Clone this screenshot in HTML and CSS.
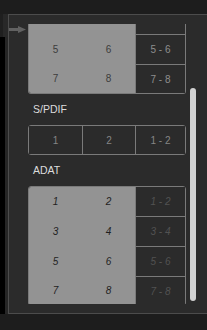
FILE: index.html
```html
<!DOCTYPE html>
<html lang="en">
<head>
  <meta charset="UTF-8">
  <title>Channel pairs</title>
  <link rel="stylesheet" href="styles.css">
</head>
<body>
  <div class="topbar"></div>
  <div class="main">
    <div class="side">
      <div class="side-top"></div>
      <div class="side-low"></div>
    </div>

    <div class="panel">
      <svg class="arrow" width="17" height="8" viewBox="0 0 17 8">
        <rect x="0" y="2" width="10" height="3" fill="#616161"/>
        <polygon points="9,0 17,3.5 9,7" fill="#616161"/>
      </svg>
      <div class="thumb"></div>

      <div class="scroll">
        <!-- analog, scrolled past the first rows -->
        <div class="grid first">
          <div class="c"></div><div class="c"></div><div class="c pair"></div>
          <div class="c">5</div><div class="c">6</div><div class="c pair">5 - 6</div>
          <div class="c bl">7</div><div class="c">8</div><div class="c pair">7 - 8</div>
        </div>

        <div class="label">S/PDIF</div>
        <div class="grid off">
          <div class="c">1</div><div class="c">2</div><div class="c">1 - 2</div>
        </div>

        <div class="label">ADAT</div>
        <div class="grid adat">
          <div class="c tl">1</div><div class="c">2</div><div class="c pair">1 - 2</div>
          <div class="c">3</div><div class="c">4</div><div class="c pair">3 - 4</div>
          <div class="c">5</div><div class="c">6</div><div class="c pair">5 - 6</div>
          <div class="c bl">7</div><div class="c">8</div><div class="c pair">7 - 8</div>
        </div>
      </div>
    </div>
  </div>
</body>
</html>
```

FILE: styles.css
```css
html, body {
  margin: 0;
  padding: 0;
}
body {
  width: 207px;
  height: 330px;
  overflow: hidden;
  background: #1d1d1d;
  font-family: "Liberation Sans", Arial, sans-serif;
}
.topbar {
  height: 14px;
  background: #1d1d1d;
}
.main {
  display: flex;
  height: 300px;
}
.side {
  width: 8px;
  display: flex;
  flex-direction: column;
}
.side-top {
  height: 23px;
  background: #282828;
  border-left: 3px solid #1f1f1f;
  box-sizing: border-box;
}
.side-low {
  flex: 1;
  background: #000;
  border-right: 3px solid #262626;
}
.panel {
  position: relative;
  flex: 1;
  background: #2b2b2b;
  border: 1px solid #4c4c4c;
  border-right: none;
  box-sizing: border-box;
  padding: 9px 0 0 19px;
}
.arrow {
  position: absolute;
  left: 0;
  top: 11px;
}
.thumb {
  position: absolute;
  left: 181px;
  top: 73px;
  width: 6px;
  height: 213px;
  border-radius: 3px;
  background: #d2d2d2;
}
.scroll {
  height: 280px;
  overflow: hidden;
  width: 160px;
}
.grid {
  width: 158px;
  box-sizing: border-box;
  border: 1px solid #7a7a7a;
  border-radius: 3px;
  display: grid;
  grid-template-columns: 53px 53px 1fr;
  grid-template-rows: 29px 30px 30px 29px;
  font-size: 10px;
}
.c {
  display: flex;
  align-items: center;
  justify-content: center;
  box-sizing: border-box;
  background: #939393;
  color: #3c3c3c;
}
.tl {
  border-top-left-radius: 2px;
}
.bl {
  border-bottom-left-radius: 2px;
}
.pair {
  background: #2b2b2b;
  color: #8e8e8e;
  border-left: 1px solid #7a7a7a;
  border-top: 1px solid #7a7a7a;
}
.grid .pair:nth-child(3) {
  border-top: none;
}
.first {
  border-top: none;
  border-radius: 0 0 3px 3px;
  grid-template-rows: 10px 30px 29px;
}
.adat .c {
  font-style: italic;
  color: #1f1f1f;
}
.adat .pair {
  color: #525252;
}
.off {
  grid-template-rows: 28px;
}
.off .c {
  background: #2b2b2b;
  color: #858585;
  border-left: 1px solid #7a7a7a;
}
.off .c:first-child {
  border-left: none;
}
.label {
  margin: 9px 0 9px 5px;
  line-height: 13px;
  font-size: 10.5px;
  color: #dcdcdc;
}
```
